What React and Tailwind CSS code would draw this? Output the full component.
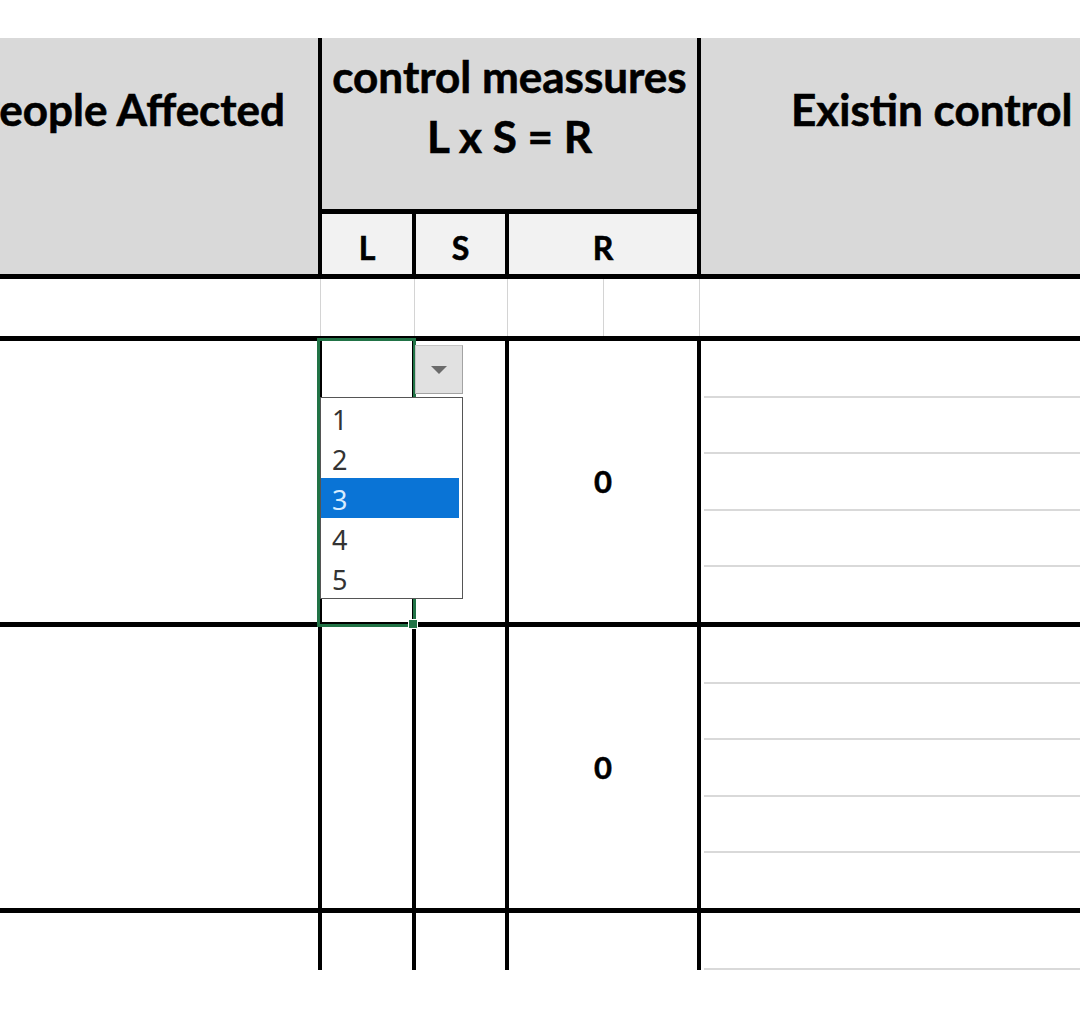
import { useState } from 'react'

const options = [1, 2, 3, 4, 5]

function BigRow({ value }) {
  return (
    <div className="flex h-[281px]">
      <div className="w-[322px] border-r-4 border-black" />
      <div className="w-[94px] border-r-4 border-black" />
      <div className="w-[93px] border-r-4 border-black" />
      <div className="w-[192px] border-r-4 border-black flex items-center justify-center">
        <span className="text-[31px] font-bold leading-none text-black [-webkit-text-stroke:0.5px_black]">{value}</span>
      </div>
      <div className="flex-1 flex flex-col pl-[3px]">
        <div className="flex-1 border-b-2 border-[#d9d9d9]" />
        <div className="flex-1 border-b-2 border-[#d9d9d9]" />
        <div className="flex-1 border-b-2 border-[#d9d9d9]" />
        <div className="flex-1 border-b-2 border-[#d9d9d9]" />
        <div className="flex-1" />
      </div>
    </div>
  )
}

function Dropdown() {
  const [selected, setSelected] = useState(3)
  return (
    <>
      {/* selected cell */}
      <div className="absolute left-[317px] top-[338px] w-[99px] h-[289px] border-[3px] border-[#217346]" />
      <div className="absolute left-[408px] top-[619px] w-[10px] h-[10px] bg-[#217346] border border-white" />

      {/* arrow button */}
      <div className="absolute left-[415px] top-[345px] w-[48px] h-[49px] bg-[#e1e1e1] border border-[#c4c4c4] border-r-[#a3a3a3] border-b-[#a3a3a3] flex items-center justify-center">
        <svg width="16" height="8" viewBox="0 0 16 8">
          <path d="M0 0 L16 0 L8 8 Z" fill="#6b6b6b" />
        </svg>
      </div>

      {/* list */}
      <div className="absolute left-[320px] top-[397px] w-[143px] bg-white border border-[#555] font-['Noto_Sans',sans-serif]">
        {options.map((n) => (
          <div
            key={n}
            onClick={() => setSelected(n)}
            className={
              n === selected
                ? 'h-[40px] mr-[3px] pl-[11px] pt-[3px] flex items-center text-[27px] leading-none bg-[#0a74d6] text-[#d8ecff]'
                : 'h-[40px] mr-[3px] pl-[11px] pt-[3px] flex items-center text-[27px] leading-none text-[#333]'
            }
          >
            {n}
          </div>
        ))}
      </div>
    </>
  )
}

export default function App() {
  return (
    <div className="relative w-[1080px] h-[1014px] bg-white overflow-hidden font-['Lato',sans-serif]">
      <div className="h-[38px]" />

      {/* header */}
      <div className="flex h-[236px] [-webkit-text-stroke:0.6px_black]">
        <div className="w-[322px] border-r-4 border-black bg-[#d9d9d9] flex justify-end pr-[33px] pt-[49px] overflow-hidden whitespace-nowrap">
          <span className="text-[44px] font-bold leading-none text-black">People Affected</span>
        </div>
        <div className="w-[379px] border-r-4 border-black flex flex-col">
          <div className="h-[176px] border-b-[5px] border-black bg-[#d9d9d9] pt-[8px] text-center text-[44px] font-bold leading-[60px] text-black">
            <div>control meassures</div>
            <div>L x S = R</div>
          </div>
          <div className="flex-1 flex bg-[#f2f2f2] text-[32px] font-bold leading-none text-black">
            <div className="w-[94px] border-r-4 border-black flex items-center justify-center pt-[8px]">L</div>
            <div className="w-[93px] border-r-4 border-black flex items-center justify-center pt-[8px]">S</div>
            <div className="flex-1 flex items-center justify-center pt-[8px]">R</div>
          </div>
        </div>
        <div className="flex-1 bg-[#d9d9d9] pl-[90px] pt-[49px] whitespace-nowrap overflow-hidden">
          <span className="text-[44px] font-bold leading-none text-black">Existin control</span>
        </div>
      </div>
      <div className="h-[5px] bg-black" />

      {/* blank row */}
      <div className="flex h-[57px]">
        <div className="w-[321px] border-r border-[#d4d4d4]" />
        <div className="w-[94px] border-r border-[#d4d4d4]" />
        <div className="w-[93px] border-r border-[#d4d4d4]" />
        <div className="w-[96px] border-r border-[#d4d4d4]" />
        <div className="w-[96px] border-r border-[#d4d4d4]" />
        <div className="flex-1" />
      </div>
      <div className="h-[5px] bg-black" />

      <BigRow value={0} />
      <div className="h-[5px] bg-black" />
      <BigRow value={0} />
      <div className="h-[5px] bg-black" />

      {/* last partial row */}
      <div className="flex h-[57px]">
        <div className="w-[322px] border-r-4 border-black" />
        <div className="w-[94px] border-r-4 border-black" />
        <div className="w-[93px] border-r-4 border-black" />
        <div className="w-[192px] border-r-4 border-black" />
        <div className="flex-1 border-b-2 border-[#d9d9d9] ml-[3px]" />
      </div>

      <Dropdown />
    </div>
  )
}
